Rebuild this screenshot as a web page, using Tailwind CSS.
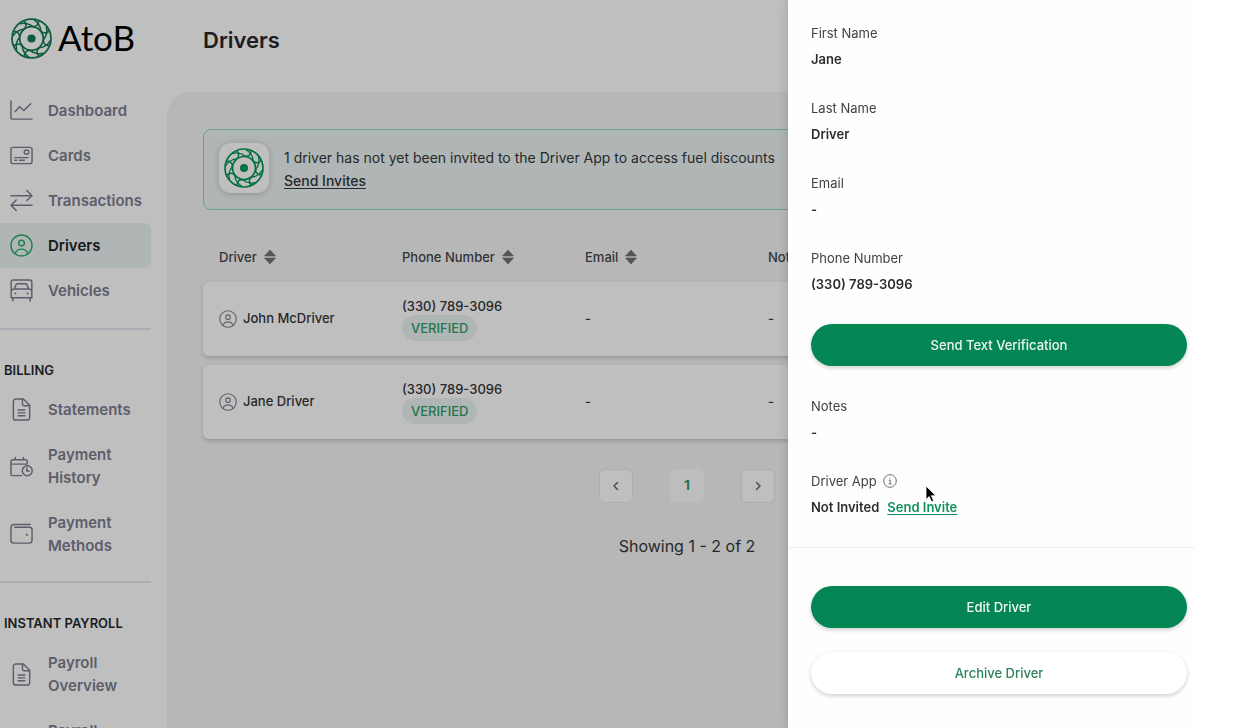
<!DOCTYPE html>
<html lang="en">
<head>
<meta charset="utf-8">
<meta name="viewport" content="width=device-width, initial-scale=1">
<title>AtoB – Drivers</title>
<script src="https://cdn.jsdelivr.net/npm/@tailwindcss/browser@4"></script>
</head>
<body class="h-screen overflow-hidden bg-white pr-11 font-['Inter',sans-serif]">

<svg class="hidden" aria-hidden="true">
  <symbol id="rosette" viewBox="0 0 40 40">
    <g fill="none" stroke="currentColor" stroke-width="1.7">
      <circle cx="20" cy="20" r="19"/>
      <circle cx="20" cy="20" r="11.5"/>
      <g stroke-width="1.5">
        <path id="petal" d="M8.500 5.500C12 4.500 17.500 5 21 8.200C24.500 9 27 6.500 27.100 2.400"/>
        <use href="#petal" transform="rotate(45 20 20)"/>
        <use href="#petal" transform="rotate(90 20 20)"/>
        <use href="#petal" transform="rotate(135 20 20)"/>
        <use href="#petal" transform="rotate(180 20 20)"/>
        <use href="#petal" transform="rotate(225 20 20)"/>
        <use href="#petal" transform="rotate(270 20 20)"/>
        <use href="#petal" transform="rotate(315 20 20)"/>
      </g>
    </g>
    <circle cx="20" cy="20" r="4" fill="currentColor"/>
  </symbol>
  <symbol id="person" viewBox="0 0 24 24">
    <g fill="none" stroke="currentColor" stroke-width="1.5" stroke-linecap="round" stroke-linejoin="round">
      <circle cx="12" cy="12" r="11"/><circle cx="12" cy="9.500" r="3"/>
      <path d="M5.500 20.500C6.500 17 9 15.800 12 15.800s5.500 1.200 6.500 4.700"/>
    </g>
  </symbol>
  <symbol id="doc" viewBox="0 0 24 24">
    <g fill="none" stroke="currentColor" stroke-width="1.500" stroke-linecap="round" stroke-linejoin="round">
      <path d="M14 1H6a2.500 2.500 0 0 0-2.500 2.500v17A2.500 2.500 0 0 0 6 23h12a2.500 2.500 0 0 0 2.500-2.500V7.500zM13 1.200v5.300a1.500 1.500 0 0 0 1.500 1.500h5.700M8.500 12.500h7M8.500 15.500h7M8.500 18.500h7"/>
    </g>
  </symbol>
  <symbol id="sort" viewBox="0 0 12 16">
    <path d="M6 1 11.500 7H.5zM.5 9h11L6 15z" fill="currentColor" stroke="currentColor" stroke-width=".6" stroke-linejoin="round"/>
  </symbol>
</svg>

<div class="flex h-full bg-[#bfbfbf]">
  <aside class="flex w-[167px] shrink-0 flex-col overflow-hidden pr-4">
    <a href="#" class="flex h-[88px] shrink-0 items-start gap-[6px] pl-[11px] pt-[18px] text-black">
      <svg class="size-[41px] shrink-0 text-[#0d5c3c]"><use href="#rosette"/></svg>
      <span class="font-['Lato',sans-serif] text-[35px] leading-[39px]">AtoB</span>
    </a>
    <nav class="text-[15px] leading-[23px] font-semibold text-[#5d5d6b]">
      <a href="#" class="flex items-center gap-[15px] py-[11px] pl-[10px]">
        <svg class="size-[23px] shrink-0" viewBox="0 0 24 24" fill="none" stroke="currentColor" stroke-width="1.500" stroke-linecap="round" stroke-linejoin="round"><path d="M1 2v17a2 2 0 0 0 2 2h20M5.500 13l4.500-5 4.500 4 7-7"/></svg>
        Dashboard</a>
      <a href="#" class="flex items-center gap-[15px] py-[11px] pl-[10px]">
        <svg class="size-[23px] shrink-0" viewBox="0 0 24 24" fill="none" stroke="currentColor" stroke-width="1.500" stroke-linecap="round"><rect x="1" y="3.500" width="22" height="17" rx="2"/><rect x="15" y="6.500" width="4.500" height="4" rx="1"/><path d="M5 14.200h14M5 17h2M10 17h5"/></svg>
        Cards</a>
      <a href="#" class="flex items-center gap-[15px] py-[11px] pl-[10px]">
        <svg class="size-[23px] shrink-0" viewBox="0 0 24 24" fill="none" stroke="currentColor" stroke-width="1.500" stroke-linecap="round" stroke-linejoin="round"><path d="M1 7h22M17.500 1.500 23 7l-5.500 5M23 17H1M6.500 11.500 1 17l5.500 5.500"/></svg>
        Transactions</a>
      <a href="#" aria-current="page" class="flex items-center gap-[15px] rounded-r-md bg-[#b0b6b5] py-[11px] pl-[10px] text-[#161719]">
        <svg class="size-[23px] shrink-0 text-[#21804f]"><use href="#person"/></svg>
        Drivers</a>
      <a href="#" class="flex items-center gap-[15px] py-[11px] pl-[10px]">
        <svg class="size-[23px] shrink-0" viewBox="0 0 24 24" fill="none" stroke="currentColor" stroke-width="1.500" stroke-linecap="round" stroke-linejoin="round"><path d="M1.200 12V3a2 2 0 0 1 2-2h17.600a2 2 0 0 1 2 2v9M1.200 19.500v-6a3 3 0 0 1 3-3h15.600a3 3 0 0 1 3 3v6zM4.500 10.500 6 6.500a2 2 0 0 1 2-1.500h8a2 2 0 0 1 2 1.500l1.500 4M3 20v3M21 20v3"/><path d="M5.500 15h.2M18.300 15h.2" stroke-width="2"/></svg>
        Vehicles</a>
    </nav>
    <hr class="mt-[15px] h-[2px] shrink-0 border-0 bg-[#acacb4]">
    <h2 class="mt-[30px] mb-[7px] pl-1 text-[13px] leading-5 font-semibold text-[#1d1d1f]">BILLING</h2>
    <nav class="text-[15px] leading-[23px] font-semibold text-[#5d5d6b]">
      <a href="#" class="flex items-center gap-[15px] py-[11px] pl-[10px]">
        <svg class="size-[23px] shrink-0"><use href="#doc"/></svg>
        Statements</a>
      <a href="#" class="flex items-center gap-[15px] py-[11px] pl-[10px]">
        <svg class="size-[23px] shrink-0" viewBox="0 0 24 24" fill="none" stroke="currentColor" stroke-width="1.500" stroke-linecap="round" stroke-linejoin="round"><path d="M12 21.500H3a2 2 0 0 1-2-2V7a2 2 0 0 1 2-2h13a2 2 0 0 1 2 2v2.500H1M5.500 2.500V5M14 2.500V5"/><circle cx="18" cy="16.500" r="5.200"/><path d="M17.500 13.500v3.200h2.500"/></svg>
        Payment History</a>
      <a href="#" class="flex items-center gap-[15px] py-[11px] pl-[10px]">
        <svg class="size-[23px] shrink-0" viewBox="0 0 24 24" fill="none" stroke="currentColor" stroke-width="1.500" stroke-linecap="round" stroke-linejoin="round"><path d="M21 1.500H4a3 3 0 0 0-3 3V18a3 3 0 0 0 3 3h16a3 3 0 0 0 3-3V7a2.500 2.500 0 0 0-2.500-2.500H5"/><path d="M17.500 12.200h.3" stroke-width="2.200"/></svg>
        Payment Methods</a>
    </nav>
    <hr class="mt-[13px] h-[2px] shrink-0 border-0 bg-[#acacb4]">
    <h2 class="mt-[30px] mb-[7px] pl-1 text-[13px] leading-5 font-semibold text-[#1d1d1f]">INSTANT PAYROLL</h2>
    <nav class="text-[15px] leading-[23px] font-semibold text-[#5d5d6b]">
      <a href="#" class="flex items-center gap-[15px] py-[11px] pl-[10px]">
        <svg class="size-[23px] shrink-0"><use href="#doc"/></svg>
        Payroll Overview</a>
      <a href="#" class="flex items-center gap-[15px] py-[11px] pl-12">Payroll</a>
    </nav>
  </aside>

  <main class="flex min-w-0 flex-1 flex-col">
    <h1 class="h-[92px] shrink-0 pt-[25px] pl-9 text-[22px] leading-[30px] font-semibold text-[#1d1d1f]">Drivers</h1>
    <section class="flex-1 overflow-hidden rounded-tl-3xl bg-[#b7b7b7] pt-[37px] pr-6 pl-9">
      <div class="flex gap-[15px] rounded-lg border border-[#6aa58a] bg-[#b0b6b5] py-[13px] pl-[15px]">
        <div class="flex size-[50px] shrink-0 items-center justify-center rounded-xl bg-[#bfbfbf] shadow-[0_1px_6px_rgba(0,0,0,0.2)]">
          <svg class="size-10 text-[#047040]"><use href="#rosette"/></svg>
        </div>
        <div class="pt-[3px] pb-1 text-[14px] leading-[23px] whitespace-nowrap text-[#26292b]">
          <p>1 driver has not yet been invited to the Driver App to access fuel discounts</p>
          <a href="#" class="font-medium underline underline-offset-2">Send Invites</a>
        </div>
      </div>

      <table class="mt-[34px] block text-[13px] font-medium text-[#26282a]">
        <thead class="block">
          <tr class="grid grid-cols-[183px_183px_183px_1fr] pl-4 text-left leading-[26px] text-[#313436]">
            <th class="font-medium"><button class="flex items-center gap-[7px]">Driver <svg class="h-4 w-3 text-[#535557]"><use href="#sort"/></svg></button></th>
            <th class="font-medium"><button class="flex items-center gap-[7px]">Phone Number <svg class="h-4 w-3 text-[#535557]"><use href="#sort"/></svg></button></th>
            <th class="font-medium"><button class="flex items-center gap-[7px]">Email <svg class="h-4 w-3 text-[#535557]"><use href="#sort"/></svg></button></th>
            <th class="font-medium"><button class="flex items-center gap-[7px]">Notes <svg class="h-4 w-3 text-[#535557]"><use href="#sort"/></svg></button></th>
          </tr>
        </thead>
        <tbody class="mt-3 flex flex-col gap-[9px]">
          <tr class="grid h-[74px] grid-cols-[183px_183px_183px_1fr] items-center rounded-md bg-[#bfbfbf] pl-4 shadow-[0_2px_4px_rgba(0,0,0,0.18)]">
            <td class="flex items-center gap-[6px]"><svg class="size-[18px] text-[#62626c]"><use href="#person"/></svg>John McDriver</td>
            <td class="leading-[18px]"><span class="block">(330) 789-3096</span><span class="block w-fit rounded-full bg-[#b0b6b5] px-[9px] leading-[26px] text-[#24754e]">VERIFIED</span></td>
            <td>-</td>
            <td>-</td>
          </tr>
          <tr class="grid h-[74px] grid-cols-[183px_183px_183px_1fr] items-center rounded-md bg-[#bfbfbf] pl-4 shadow-[0_2px_4px_rgba(0,0,0,0.18)]">
            <td class="flex items-center gap-[6px]"><svg class="size-[18px] text-[#62626c]"><use href="#person"/></svg>Jane Driver</td>
            <td class="leading-[18px]"><span class="block">(330) 789-3096</span><span class="block w-fit rounded-full bg-[#b0b6b5] px-[9px] leading-[26px] text-[#24754e]">VERIFIED</span></td>
            <td>-</td>
            <td>-</td>
          </tr>
        </tbody>
      </table>

      <nav aria-label="Pagination" class="mt-[30px] flex justify-center gap-[37px] text-[13px]">
        <button aria-label="Previous page" class="flex size-[34px] items-center justify-center rounded-md border border-[#adadad] bg-[#bfbfbf] text-[#4c4e50]">
          <svg class="size-3" viewBox="0 0 12 12" fill="none" stroke="currentColor" stroke-width="1.500" stroke-linecap="round" stroke-linejoin="round"><path d="M7.500 2.500 4 6l3.500 3.500"/></svg>
        </button>
        <button aria-current="page" class="size-[34px] rounded-md bg-[#bdbdbd] font-bold text-[#1c7449]">1</button>
        <button aria-label="Next page" class="flex size-[34px] items-center justify-center rounded-md border border-[#adadad] bg-[#bfbfbf] text-[#4c4e50]">
          <svg class="size-3" viewBox="0 0 12 12" fill="none" stroke="currentColor" stroke-width="1.500" stroke-linecap="round" stroke-linejoin="round"><path d="M4.500 2.500 8 6 4.500 9.500"/></svg>
        </button>
      </nav>
      <p class="mt-[30px] text-center text-base leading-[26px] text-[#26282a]">Showing 1 - 2 of 2</p>
    </section>
  </main>
</div>

<!-- Driver details drawer, over the page -->
<aside class="fixed inset-y-0 right-11 w-[407px] overflow-hidden bg-[#fefefe] pt-5 text-[13px] leading-[26px] text-[#3f4144] [clip-path:inset(0_0_0_-20px)] shadow-[0_0_10px_rgba(0,0,0,0.18)]">
  <dl class="flex flex-col gap-[23px] pl-[23px]">
    <div><dt>First Name</dt><dd class="font-semibold text-[#2b2d2f]">Jane</dd></div>
    <div><dt>Last Name</dt><dd class="font-semibold text-[#2b2d2f]">Driver</dd></div>
    <div><dt>Email</dt><dd class="font-semibold text-[#2b2d2f]">-</dd></div>
    <div><dt>Phone Number</dt><dd class="font-semibold text-[#2b2d2f]">(330) 789-3096</dd></div>
  </dl>
  <div class="my-[27px] pr-2 pl-[23px]">
    <button class="block h-[42px] w-full rounded-full bg-[#048654] font-medium text-[#eef5f1] shadow-[0_2px_4px_rgba(0,0,0,0.18)]">Send Text Verification</button>
  </div>
  <dl class="flex flex-col gap-[23px] pl-[23px]">
    <div><dt>Notes</dt><dd class="font-semibold text-[#2b2d2f]">-</dd></div>
    <div>
      <dt class="flex items-center gap-[6px]">Driver App
        <svg class="size-[14px] text-[#6b6d72]" viewBox="0 0 14 14" fill="none" stroke="currentColor"><circle cx="7" cy="7" r="6.300"/><path d="M5.800 6.200H7.200V9.800M5.600 9.900h3M6.500 4.200h1"/></svg>
      </dt>
      <dd class="flex gap-2 font-semibold text-[#2b2d2f]">Not Invited <a href="#" class="text-[#12905c] underline underline-offset-2">Send Invite</a></dd>
    </div>
  </dl>
  <hr class="mt-[27px] border-[#efefef]">
  <div class="mt-[38px] flex flex-col gap-6 pr-2 pl-[23px]">
    <button class="h-[42px] w-full rounded-full bg-[#048654] font-medium text-[#f4f9f6] shadow-[0_2px_4px_rgba(0,0,0,0.18)]">Edit Driver</button>
    <button class="h-[42px] w-full rounded-full bg-white font-medium text-[#2b8259] shadow-[0_2px_4px_rgba(0,0,0,0.18)]">Archive Driver</button>
  </div>
</aside>

<!-- Mouse pointer -->
<svg class="pointer-events-none fixed top-[485px] right-[301px] h-[18px] w-[13px]" viewBox="0 0 13 18" aria-hidden="true"><path d="M1 1v13.500l3.200-3 2.300 5.300 2.200-1-2.300-5.100h4.400z" fill="#000" stroke="#fff" stroke-width=".8"/></svg>
</body>
</html>
